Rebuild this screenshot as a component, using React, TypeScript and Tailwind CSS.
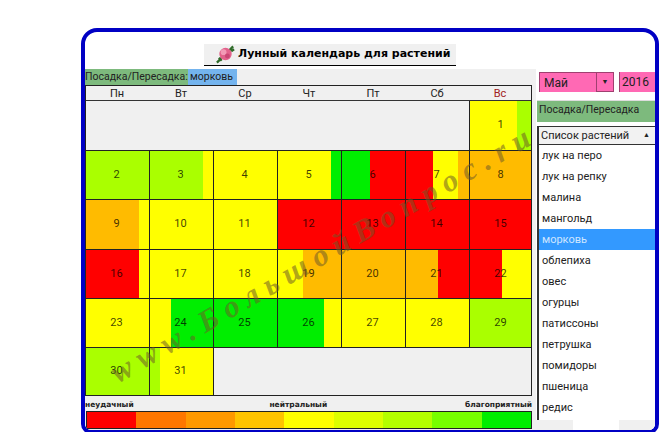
import React from 'react';

const colors: Record<string, string> = {
  y: 'bg-[#ffff00]',
  l: 'bg-[#aaff00]',
  g: 'bg-[#00ee00]',
  r: 'bg-[#ff0000]',
  o: 'bg-[#ffbb00]',
};

type Day = { n: number; segs: [string, number][] };

const rows: Day[][] = [
  [{ n: 1, segs: [['y', 47], ['l', 14]] }],
  [
    { n: 2, segs: [['l', 63]] },
    { n: 3, segs: [['l', 53], ['y', 10]] },
    { n: 4, segs: [['y', 63]] },
    { n: 5, segs: [['y', 53], ['g', 10]] },
    { n: 6, segs: [['g', 28], ['r', 35]] },
    { n: 7, segs: [['r', 27], ['y', 25], ['o', 11]] },
    { n: 8, segs: [['o', 61]] },
  ],
  [
    { n: 9, segs: [['o', 53], ['y', 10]] },
    { n: 10, segs: [['y', 63]] },
    { n: 11, segs: [['y', 63]] },
    { n: 12, segs: [['r', 63]] },
    { n: 13, segs: [['r', 63]] },
    { n: 14, segs: [['r', 63]] },
    { n: 15, segs: [['r', 61]] },
  ],
  [
    { n: 16, segs: [['r', 53], ['y', 10]] },
    { n: 17, segs: [['y', 63]] },
    { n: 18, segs: [['y', 63]] },
    { n: 19, segs: [['y', 25], ['o', 38]] },
    { n: 20, segs: [['o', 63]] },
    { n: 21, segs: [['o', 32], ['r', 31]] },
    { n: 22, segs: [['r', 32], ['y', 29]] },
  ],
  [
    { n: 23, segs: [['y', 63]] },
    { n: 24, segs: [['y', 21], ['g', 42]] },
    { n: 25, segs: [['g', 63]] },
    { n: 26, segs: [['g', 46], ['y', 17]] },
    { n: 27, segs: [['y', 63]] },
    { n: 28, segs: [['y', 63]] },
    { n: 29, segs: [['l', 61]] },
  ],
  [
    { n: 30, segs: [['l', 63]] },
    { n: 31, segs: [['l', 10], ['y', 53]] },
  ],
];

const weekDays = ['Пн', 'Вт', 'Ср', 'Чт', 'Пт', 'Сб', 'Вс'];

const legend = [
  'bg-[#ff0000]',
  'bg-[#ff7700]',
  'bg-[#ff9900]',
  'bg-[#ffc400]',
  'bg-[#ffff00]',
  'bg-[#ddff00]',
  'bg-[#b4ff00]',
  'bg-[#77ff00]',
  'bg-[#00ee00]',
];

const plants = [
  'лук на перо',
  'лук на репку',
  'малина',
  'мангольд',
  'морковь',
  'облепиха',
  'овес',
  'огурцы',
  'патиссоны',
  'петрушка',
  'помидоры',
  'пшеница',
  'редис',
];

const Cell: React.FC<{ day: Day; last?: boolean }> = ({ day, last }) => (
  <div className={`relative flex border-b border-[#222] ${last ? '' : 'border-r'}`}>
    {day.segs.map(([c, w], i) => (
      <div key={i} className={colors[c]} style={{ width: w }} />
    ))}
    <span className={`absolute inset-0 flex items-center justify-center text-[11px] text-black/75 ${last ? 'pr-[1px]' : 'pr-[2px]'}`}>{day.n}</span>
  </div>
);

const Rose = () => (
  <svg width="21" height="20" viewBox="0 0 22 20" className="shrink-0">
    <path d="M2 18 L7 13 M4 13 L7 16 M15 5 L19 1 M17 6 L20 4" stroke="#2f6b2a" strokeWidth="2.4" />
    <circle cx="11" cy="9" r="6.5" fill="#e2628c" />
    <circle cx="9" cy="7" r="3" fill="#f29ab6" />
    <circle cx="13" cy="11" r="2.6" fill="#c94674" />
  </svg>
);

const App: React.FC = () => {
  return (
    <div className="h-[432px] w-[659px] overflow-hidden bg-white pl-[81px] pt-[28px] font-['Roboto','Noto_Sans',sans-serif] text-[#222]">
      <div className="relative h-[406px] w-[578px] overflow-hidden rounded-t-[16px] rounded-b-[10px] border-4 border-[#0000c4] bg-white">
        {/* Title */}
        <div className="flex h-[37px] pl-[119px] pt-[12px]">
          <div className="flex h-[22px] w-[252px] items-center gap-[2px] border-b border-black bg-[#f0f0f0] pl-[11px] font-['DejaVu_Sans',sans-serif] text-[11px] font-bold text-black">
            <Rose />
            <span className="whitespace-nowrap">Лунный календарь для растений</span>
          </div>
        </div>

        <div className="flex h-[361px]">
          {/* Calendar side */}
          <div className="w-[451px] bg-[#f0f0f0]">
            <div className="flex h-[16px] items-center text-[10.5px] leading-none">
              <span className="flex h-full w-[103px] items-center whitespace-nowrap bg-[#7dba7d]">Посадка/Пересадка:</span>
              <span className="flex h-full w-[49px] items-center whitespace-nowrap bg-[#74b4ee] pl-[2px]">морковь</span>
            </div>

            <div className="w-[447px] border-l border-[#222]">
              <div className="grid h-[16px] grid-cols-[64px_64px_64px_64px_64px_64px_62px] border-y border-r border-t-[#222] border-b-[#333] border-r-[#222] text-[11px] leading-none">
                {weekDays.map((d) => (
                  <div key={d} className={`flex items-center justify-center pr-[2px] ${d === 'Вс' ? 'text-[#a02020]' : ''}`}>
                    {d}
                  </div>
                ))}
              </div>
              <div className="grid grid-cols-[64px_64px_64px_64px_64px_64px_62px] grid-rows-[50px_49px_50px_49px_49px_48px] border-r border-[#222]">
                <div className="col-span-6 border-b border-r border-[#222]" />
                <Cell day={rows[0][0]} last />
                {rows.slice(1, 5).flat().map((d) => (
                  <Cell key={d.n} day={d} last={d.n % 7 === 1} />
                ))}
                {rows[5].map((d) => (
                  <Cell key={d.n} day={d} />
                ))}
                <div className="col-span-5 border-b border-[#222]" />
              </div>
            </div>

            <div className="flex h-[15px] w-[447px] items-center justify-between pt-[2px] font-['DejaVu_Sans',sans-serif] text-[7.5px] font-bold leading-none text-[#222]">
              <span>неудачный</span>
              <span className="pr-[2px]">нейтральный</span>
              <span>благоприятный</span>
            </div>
            <div className="ml-px flex h-[18px] w-[446px] border border-[#222]">
              {legend.map((c) => (
                <div key={c} className={`flex-1 ${c}`} />
              ))}
            </div>
          </div>

          {/* Right controls */}
          <div className="flex w-[119px] flex-col bg-white text-[10.5px] leading-none">
            <div className="flex h-[23px] items-end gap-[5px] pl-[3px] text-[12px]">
              <div className="flex h-[20px] w-[75px] items-center justify-between border-l border-t border-[#a04070] bg-[#ff69b4] pl-[4px]">
                <span>Май</span>
                <span className="flex h-full w-[18px] items-center justify-center border-b border-l border-r border-[#a04070] text-[7px]">▼</span>
              </div>
              <div className="flex h-[20px] flex-1 items-center border-l border-[#a04070] bg-[#ff69b4] pl-[2px]">2016</div>
            </div>
            <div className="ml-px mt-[8px] flex h-[22px] items-center border-t border-[#ddd] bg-[#7dba7d] pb-[3px] pl-[2px]">Посадка/Пересадка</div>
            <div className="ml-px mt-[4px] flex h-[294px] flex-col overflow-hidden border-l-2 border-t border-[#333]">
              <div className="flex h-[18px] shrink-0 items-center justify-between border-b border-[#333] bg-[#f2f2f2] pl-[2px] pr-[5px] text-[11px]">
                <span>Список растений</span>
                <span className="text-[7px]">▲</span>
              </div>
              {plants.map((p) => (
                <div
                  key={p}
                  className={`flex h-[21px] shrink-0 items-center pl-[3px] text-[11px] ${p === 'морковь' ? 'bg-[#3399ff] text-[#cfe6ff]' : ''}`}
                >
                  {p}
                </div>
              ))}
            </div>
            <div className="flex flex-1 justify-center bg-[#f0f0f0]">
              <div className="h-full w-[46px] bg-white" />
            </div>
          </div>
        </div>

        {/* Watermark over the page */}
        <span className="pointer-events-none absolute left-[28px] top-[320px] origin-left -rotate-[30deg] whitespace-nowrap font-['Liberation_Serif',serif] text-[31px] font-bold italic tracking-[8px] text-[#6e5a28]/55">
          www.БольшойВопрос.ru
        </span>
      </div>
    </div>
  );
};

export default App;
